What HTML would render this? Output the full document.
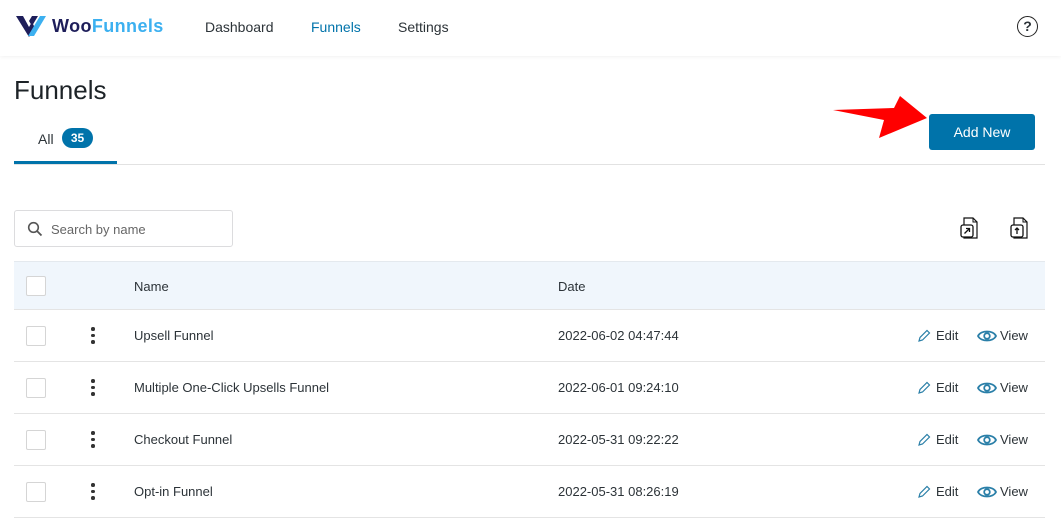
<!DOCTYPE html>
<html><head><meta charset="utf-8"><style>
*{box-sizing:border-box;margin:0;padding:0}
body{width:1061px;height:522px;overflow:hidden;background:#fff;font-family:"Liberation Sans",sans-serif;color:#2c3338;position:relative}
.hdr{position:absolute;left:0;top:0;width:1061px;height:56px;background:#fff;box-shadow:0 1px 4px rgba(0,0,0,.06)}
.abs{position:absolute}
.nav{font-size:14px;top:19px}
.row{position:absolute;left:14px;width:1031px;height:52px;border-bottom:1px solid #e4e4e4;font-size:13px}
.cb{position:absolute;left:12px;width:20px;height:20px;border:1px solid #d5d5d5;border-radius:2px;background:#fff}
.dots{position:absolute;left:77px;width:4px}
.dots i{display:block;width:3.5px;height:3.5px;background:#333;border-radius:50%;margin-bottom:3px}
</style></head><body>
<div class="hdr">
 <svg class="abs" style="left:16px;top:15px" width="32" height="22" viewBox="0 0 32 22"><path d="M0 1h7l6 11 3-5 3 6-6 9z" fill="#1e1e5a"/><path d="M24 1h6L18 21h-6z" fill="#3cb0f0"/><path d="M16 1h6l-6 10-3-5z" fill="#1e1e5a"/></svg>
 <div class="abs" style="left:52px;top:16px;font-size:18px;font-weight:bold;letter-spacing:.4px"><span style="color:#1e1e5a">Woo</span><span style="color:#3cb0f0">Funnels</span></div>
 <div class="abs nav" style="left:205px">Dashboard</div>
 <div class="abs nav" style="left:311px;color:#0073aa">Funnels</div>
 <div class="abs nav" style="left:398px">Settings</div>
 <div class="abs" style="left:1017px;top:16px;width:21px;height:21px;border:1.6px solid #222;border-radius:50%;font-size:14px;font-weight:bold;text-align:center;line-height:18px">?</div>
</div>
<div class="abs" style="left:14px;top:75px;font-size:26px;color:#1d2327">Funnels</div>
<div class="abs" style="left:38px;top:131px;font-size:14px">All</div>
<div class="abs" style="left:62px;top:128px;width:31px;height:20px;border-radius:10px;background:#0073aa;color:#fff;font-size:12px;font-weight:bold;text-align:center;line-height:20px">35</div>
<div class="abs" style="left:14px;top:164px;width:1031px;height:1px;background:#e2e2e2"></div>
<div class="abs" style="left:14px;top:161px;width:103px;height:3px;background:#0073aa"></div>
<svg class="abs" style="left:832px;top:96px" width="96" height="44" viewBox="0 0 96 44"><path d="M1 14 L52 24 L47 42 L95 22 L68 0 L62 12 Z" fill="#f00"/></svg>
<div class="abs" style="left:929px;top:114px;width:106px;height:36px;background:#0073aa;border-radius:3px;color:#fff;font-size:14px;text-align:center;line-height:36px">Add New</div>
<div class="abs" style="left:14px;top:210px;width:219px;height:37px;border:1px solid #dcdcde;border-radius:3px"></div>
<svg class="abs" style="left:27px;top:221px" width="16" height="16" viewBox="0 0 16 16"><circle cx="6.5" cy="6.5" r="4.8" fill="none" stroke="#555" stroke-width="1.6"/><path d="M10 10l4.5 4.5" stroke="#555" stroke-width="1.8"/></svg>
<div class="abs" style="left:51px;top:222px;font-size:13px;color:#666">Search by name</div>
<svg class="abs" style="left:959px;top:216px" width="22" height="24" viewBox="0 0 22 24"><path d="M5 2h9l4 4v16H5z" fill="none" stroke="#111" stroke-width="1.2"/><path d="M14 2v4h4" fill="none" stroke="#111" stroke-width="1"/><rect x="2" y="9" width="12" height="12" rx="2" fill="#fff" stroke="#111" stroke-width="1.3"/><path d="M5.5 17.5l5-5M7 12.5h3.5V16" fill="none" stroke="#111" stroke-width="1.3"/></svg>
<svg class="abs" style="left:1009px;top:216px" width="22" height="24" viewBox="0 0 22 24"><path d="M5 2h9l4 4v16H5z" fill="none" stroke="#111" stroke-width="1.2"/><path d="M14 2v4h4" fill="none" stroke="#111" stroke-width="1"/><rect x="2" y="9" width="12" height="12" rx="2" fill="#fff" stroke="#111" stroke-width="1.3"/><path d="M8 18v-6M6 14l2-2 2 2" fill="none" stroke="#111" stroke-width="1.3"/></svg>
<div class="row" style="top:261px;height:49px;background:#f0f6fc;border-top:1px solid #e4e9ee">
 <div class="cb" style="top:14px"></div>
 <div class="abs" style="left:120px;top:17px">Name</div>
 <div class="abs" style="left:544px;top:17px">Date</div>
</div>
<div class="row" style="top:310px"><div class="cb" style="top:16px"></div><div class="dots" style="top:17px"><i></i><i></i><i></i></div><div class="abs" style="left:120px;top:18px">Upsell Funnel</div><div class="abs" style="left:544px;top:18px">2022-06-02 04:47:44</div><div class="ev abs" style="left:903px;top:18px"></div></div>
<div class="row" style="top:362px"><div class="cb" style="top:16px"></div><div class="dots" style="top:17px"><i></i><i></i><i></i></div><div class="abs" style="left:120px;top:18px">Multiple One-Click Upsells Funnel</div><div class="abs" style="left:544px;top:18px">2022-06-01 09:24:10</div><div class="ev abs" style="left:903px;top:18px"></div></div>
<div class="row" style="top:414px"><div class="cb" style="top:16px"></div><div class="dots" style="top:17px"><i></i><i></i><i></i></div><div class="abs" style="left:120px;top:18px">Checkout Funnel</div><div class="abs" style="left:544px;top:18px">2022-05-31 09:22:22</div><div class="ev abs" style="left:903px;top:18px"></div></div>
<div class="row" style="top:466px"><div class="cb" style="top:16px"></div><div class="dots" style="top:17px"><i></i><i></i><i></i></div><div class="abs" style="left:120px;top:18px">Opt-in Funnel</div><div class="abs" style="left:544px;top:18px">2022-05-31 08:26:19</div><div class="ev abs" style="left:903px;top:18px"></div></div>
<script>
document.querySelectorAll('.ev').forEach(e=>{e.innerHTML='<svg style="position:absolute;left:0;top:1px" width="14" height="14" viewBox="0 0 14 14"><path d="M2 12l1-3.5 7-7 2.5 2.5-7 7z" fill="none" stroke="#2a7fa8" stroke-width="1.2"/></svg><span style="position:absolute;left:19px;top:0">Edit</span><svg style="position:absolute;left:60px;top:0px" width="20" height="16" viewBox="0 0 20 16"><path d="M1 8C4 2 16 2 19 8 16 14 4 14 1 8z" fill="none" stroke="#2a7fa8" stroke-width="1.8"/><circle cx="10" cy="8" r="2.8" fill="none" stroke="#2a7fa8" stroke-width="1.8"/></svg><span style="position:absolute;left:83px;top:0">View</span>';});
</script>
</body></html>
